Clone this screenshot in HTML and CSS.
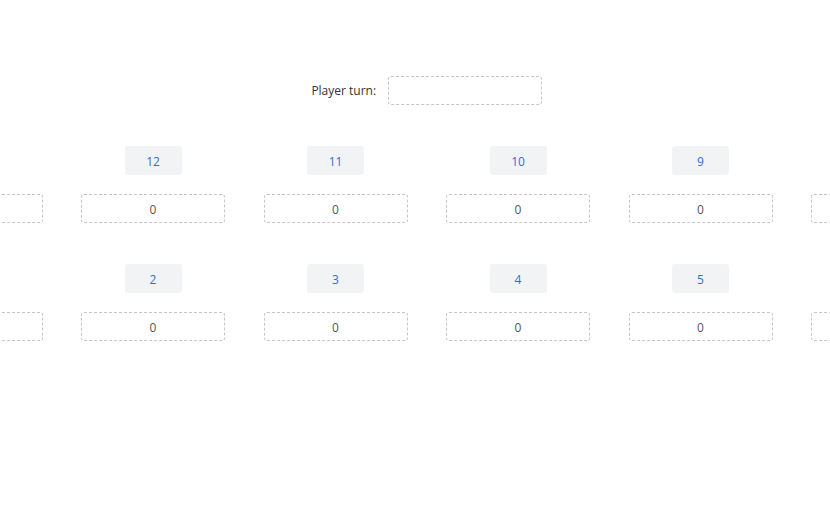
FILE: index.html
```html
<!DOCTYPE html>
<html>
<head>
<meta charset="utf-8">
<link rel="stylesheet" href="styles.css">
</head>
<body>
<div class="page">
  <div class="turn">
    <span class="turn-label">Player turn:</span>
    <div class="turn-input"></div>
  </div>
  <div class="board">
    <div class="row">
      <div class="pit"><div class="num">13</div><div class="val">0</div></div>
      <div class="pit"><div class="num">12</div><div class="val">0</div></div>
      <div class="pit"><div class="num">11</div><div class="val">0</div></div>
      <div class="pit"><div class="num">10</div><div class="val">0</div></div>
      <div class="pit"><div class="num">9</div><div class="val">0</div></div>
      <div class="pit"><div class="num">8</div><div class="val">0</div></div>
    </div>
    <div class="row">
      <div class="pit"><div class="num">1</div><div class="val">0</div></div>
      <div class="pit"><div class="num">2</div><div class="val">0</div></div>
      <div class="pit"><div class="num">3</div><div class="val">0</div></div>
      <div class="pit"><div class="num">4</div><div class="val">0</div></div>
      <div class="pit"><div class="num">5</div><div class="val">0</div></div>
      <div class="pit"><div class="num">6</div><div class="val">0</div></div>
    </div>
  </div>
</div>
</body>
</html>
```
FILE: styles.css
```css
html, body {
  margin: 0;
  padding: 0;
  background: #ffffff;
  overflow: hidden;
}
body {
  width: 830px;
  height: 519px;
  font-family: "Open Sans", "Noto Sans", sans-serif;
  font-size: 12px;
  color: #333;
}
.page {
  padding-left: 23.5px;
  padding-top: 76px;
  display: flex;
  flex-direction: column;
  align-items: center;
}
.turn {
  display: flex;
  align-items: center;
  gap: 12px;
}
.turn-label {
  color: #333;
  font-size: 12px;
}
.turn-input {
  width: 152px;
  height: 27px;
  border: 1px dashed #c6c6c6;
  border-radius: 3px;
}
.board {
  margin-top: 41px;
  display: flex;
  flex-direction: column;
  gap: 41px;
}
.row {
  display: flex;
  justify-content: center;
  gap: 38.5px;
  width: 0;
  margin: 0 auto;
}
.pit {
  flex: 0 0 144px;
  display: flex;
  flex-direction: column;
  align-items: center;
  gap: 19px;
}
.num {
  box-sizing: border-box;
  width: 57px;
  height: 29px;
  padding-top: 2px;
  background: #f2f3f5;
  border-radius: 3px;
  color: #2f6fd6;
  display: flex;
  align-items: center;
  justify-content: center;
  font-size: 12px;
}
.val {
  box-sizing: border-box;
  width: 144px;
  height: 29px;
  padding-top: 2px;
  border: 1px dashed #c6c6c6;
  border-radius: 3px;
  display: flex;
  align-items: center;
  justify-content: center;
  color: #555;
  font-size: 12px;
}
```
